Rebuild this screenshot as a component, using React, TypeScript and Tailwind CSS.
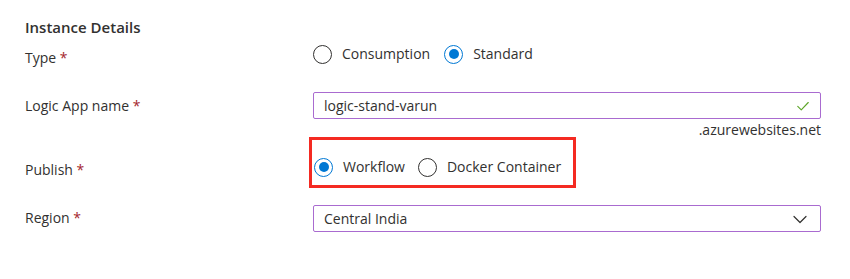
import React from 'react';

const font = { fontFamily: '"Open Sans", "Noto Sans", sans-serif' };

function Radio({ label, checked }: { label: string; checked?: boolean }) {
  return (
    <label className="flex items-center gap-[10px] text-[14px] leading-[20px] text-[#323130]">
      {checked ? (
        <span className="flex h-[19px] w-[19px] items-center justify-center rounded-full border border-[#0078d4]">
          <span className="h-[10px] w-[10px] rounded-full bg-[#0078d4]" />
        </span>
      ) : (
        <span className="h-[19px] w-[19px] rounded-full border border-[#323130]" />
      )}
      <span>{label}</span>
    </label>
  );
}

function Label({ text, className }: { text: string; className?: string }) {
  return (
    <div className={'text-[14px] leading-[20px] text-[#323130] ' + (className ?? '')}>
      {text} <span className="text-[#a4262c]">*</span>
    </div>
  );
}

export default function App() {
  return (
    <div className="h-[279px] w-[850px] bg-white pl-[25px]" style={font}>
      <div className="pt-[17px] text-[15px] font-semibold leading-[20px] text-[#323130]">Instance Details</div>

      {/* Type */}
      <div className="mt-[7px] grid grid-cols-[288px_508px]">
        <Label text="Type" className="mt-[4px]" />
        <div className="flex h-[20px] items-center gap-[14px]">
          <Radio label="Consumption" />
          <Radio label="Standard" checked />
        </div>
      </div>

      {/* Logic App name */}
      <div className="mt-[24px] grid grid-cols-[288px_508px]">
        <Label text="Logic App name" className="mt-[4px]" />
        <div>
          <div className="flex h-[27px] items-center justify-between rounded-[2px] border-[1.5px] border-[#a96bd0] pl-[10px] pr-[10px]">
            <span className="text-[14px] text-[#323130]">logic-stand-varun</span>
            <svg width="14" height="14" viewBox="0 0 16 16" fill="none">
              <path d="M2 8.5 L6 12.5 L14 4" stroke="#5ea629" strokeWidth="1.3" strokeLinecap="round" strokeLinejoin="round" />
            </svg>
          </div>
          <div className="mt-[4px] text-right text-[14px] leading-[14px] text-[#323130]">.azurewebsites.net</div>
        </div>
      </div>

      {/* Publish */}
      <div className="grid grid-cols-[288px_508px]">
        <Label text="Publish" className="mt-[23px]" />
        <div>
          <div className="ml-[-4px] inline-flex w-[267px] items-center gap-[13px] border-[3px] border-[#f42a22] pb-[8px] pl-[2px] pt-[17px]">
            <Radio label="Workflow" checked />
            <Radio label="Docker Container" />
          </div>
        </div>
      </div>

      {/* Region */}
      <div className="mt-[17px] grid grid-cols-[288px_508px]">
        <Label text="Region" className="mt-[3px]" />
        <div className="flex h-[27px] items-center justify-between rounded-[2px] border-[1.5px] border-[#a96bd0] pl-[10px] pr-[12px]">
          <span className="text-[14px] text-[#323130]">Central India</span>
          <svg width="16" height="16" viewBox="0 0 16 16" fill="none">
            <path d="M2 5.5 L8 11.5 L14 5.5" stroke="#323130" strokeWidth="1.2" strokeLinecap="round" strokeLinejoin="round" />
          </svg>
        </div>
      </div>
    </div>
  );
}
